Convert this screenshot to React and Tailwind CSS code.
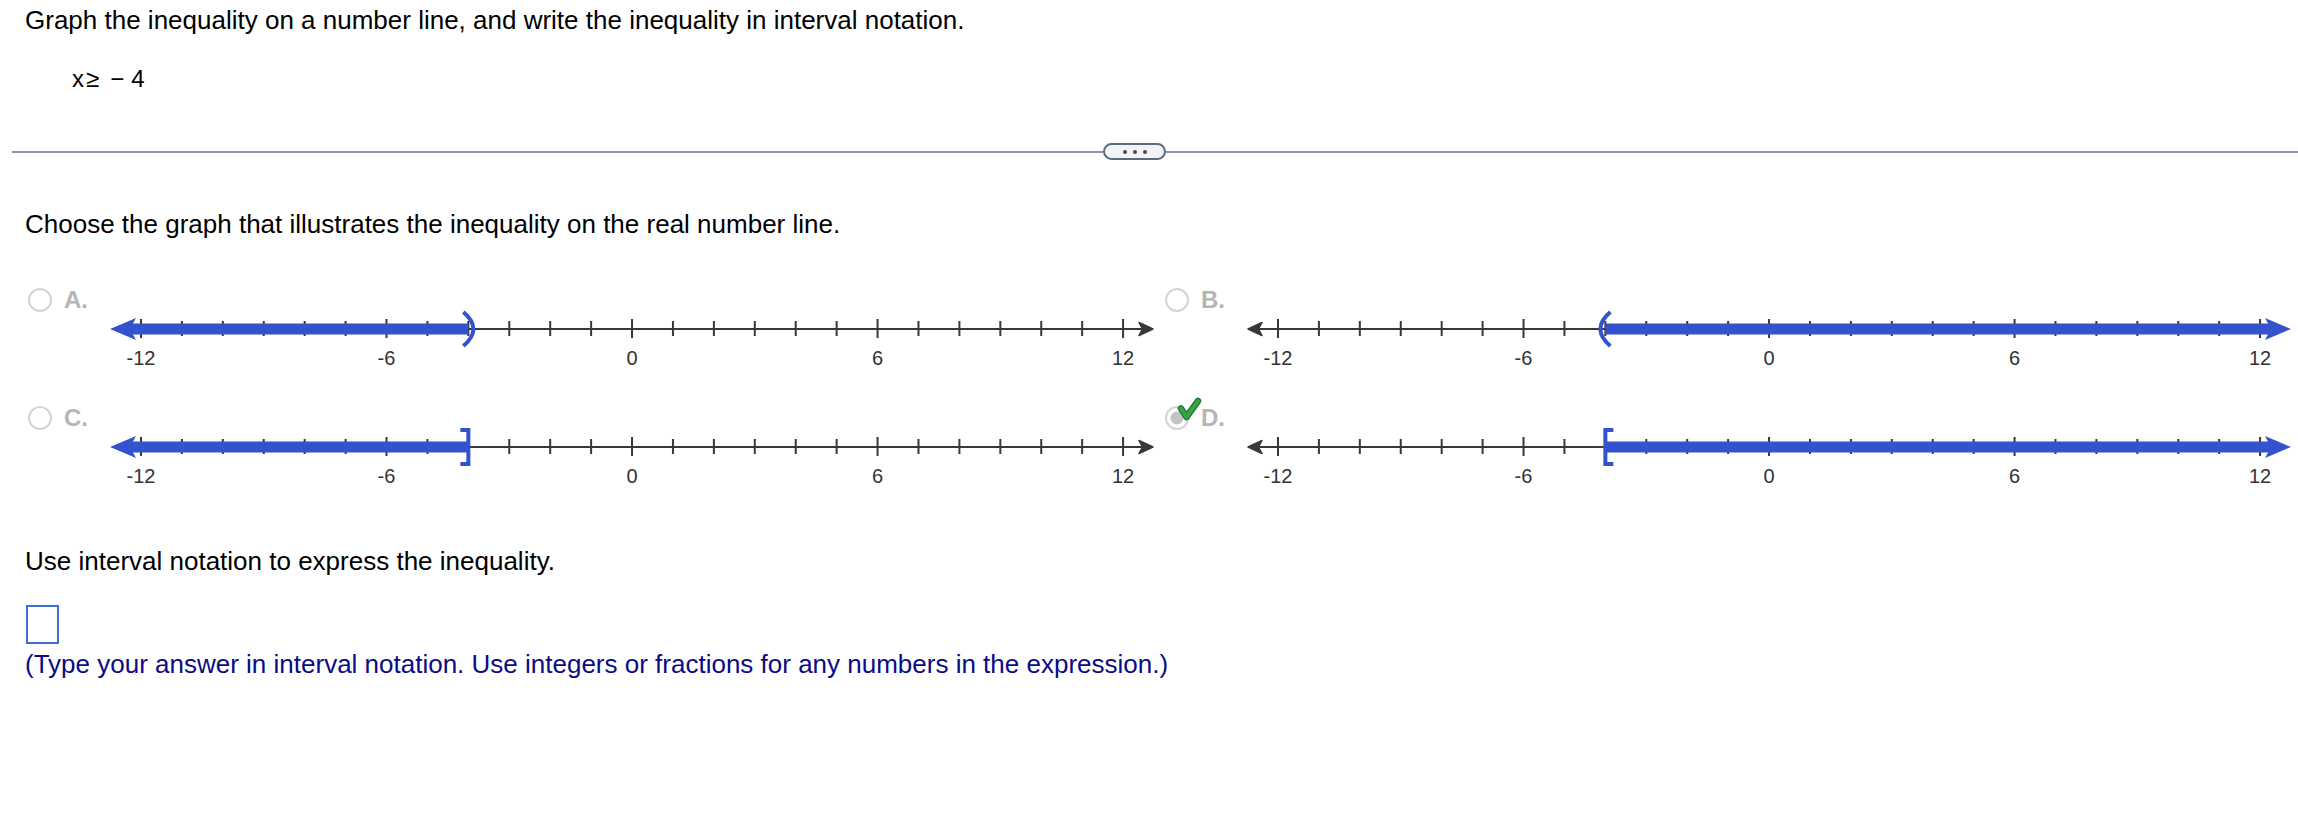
import React from 'react';

const FONT = { fontFamily: '"Liberation Sans", Arial, sans-serif' };

const X0 = 45;
const U = 40.92;
const Y = 19;
const BLUE = '#3353cc';
const INK = '#383838';

const xOf = (v) => X0 + (v + 12) * U;

function NumberLine({ kind }) {
  const xm4 = xOf(-4);
  const ticks = [];
  for (let v = -12; v <= 12; v++) ticks.push(v);
  const leftRay = kind === 'A' || kind === 'C';

  return (
    <svg width="1070" height="62" className="block overflow-visible">
      {/* axis */}
      <line x1="20" y1={Y} x2="1050" y2={Y} stroke={INK} strokeWidth="2" />
      {ticks.map((v) => {
        const major = v % 6 === 0;
        const x = xOf(v);
        return (
          <line
            key={v}
            x1={x}
            x2={x}
            y1={major ? Y - 10 : Y - 8}
            y2={major ? Y + 9 : Y + 7}
            stroke={INK}
            strokeWidth="2"
          />
        );
      })}
      {[-12, -6, 0, 6, 12].map((v) => (
        <text key={v} x={xOf(v)} y="55" textAnchor="middle" fontSize="20" fill="#333" style={FONT}>
          {v}
        </text>
      ))}

      {/* shaded ray */}
      {leftRay ? (
        <>
          <line x1="30" y1={Y} x2={xm4} y2={Y} stroke={BLUE} strokeWidth="11" />
          <path d="M14,19 L40,8 L34,19 L40,30 Z" fill={BLUE} />
          <path d="M1057,19 L1043,12.5 L1046.5,19 L1043,25.5 Z" fill={INK} stroke={INK} strokeWidth="1.5" strokeLinejoin="round" />
        </>
      ) : (
        <>
          <line x1={xm4} y1={Y} x2="1042" y2={Y} stroke={BLUE} strokeWidth="11" />
          <path d="M1058,19 L1032,8 L1038,19 L1032,30 Z" fill={BLUE} />
          <path d="M15,19 L29,12.5 L25.5,19 L29,25.5 Z" fill={INK} stroke={INK} strokeWidth="1.5" strokeLinejoin="round" />
        </>
      )}

      {/* endpoint */}
      {kind === 'A' && (
        <path d={`M${xm4 - 5},2 Q${xm4 + 15},19 ${xm4 - 5},36`} fill="none" stroke={BLUE} strokeWidth="4" />
      )}
      {kind === 'B' && (
        <path d={`M${xm4 + 5},2 Q${xm4 - 15},19 ${xm4 + 5},36`} fill="none" stroke={BLUE} strokeWidth="4" />
      )}
      {kind === 'C' && (
        <path d={`M${xm4 - 8},2 H${xm4} V36 H${xm4 - 8}`} fill="none" stroke={BLUE} strokeWidth="4" />
      )}
      {kind === 'D' && (
        <path d={`M${xm4 + 8},2 H${xm4} V36 H${xm4 + 8}`} fill="none" stroke={BLUE} strokeWidth="4" />
      )}
    </svg>
  );
}

function Radio({ checked }) {
  return (
    <svg width="26" height="26" className="block overflow-visible shrink-0">
      <circle cx="13" cy="13" r="11" fill="#fff" stroke="#d4d4d4" strokeWidth="2" />
      {checked && (
        <>
          <circle cx="13" cy="13" r="6.5" fill="#c4c4c4" />
          <path d="M17,3.5 L22.5,12 L34,-4" fill="none" stroke="#1f7a2d" strokeWidth="6.5" strokeLinecap="round" strokeLinejoin="round" />
          <path d="M17,3.5 L22.5,12 L34,-4" fill="none" stroke="#34a847" strokeWidth="3.8" strokeLinecap="round" strokeLinejoin="round" />
        </>
      )}
    </svg>
  );
}

function Option({ letter, kind, checked }) {
  return (
    <div className="w-[1137px] flex flex-col">
      <div className="flex items-center h-[26px]">
        <Radio checked={checked} />
        <span className="ml-[11px] text-[24px] leading-[26px] font-bold text-[#b5b5b5]">{letter}.</span>
      </div>
      <div className="ml-[69px] -mt-[3px]">
        <NumberLine kind={kind} />
      </div>
    </div>
  );
}

export default function App() {
  return (
    <div className="w-[2298px] h-[816px] bg-white overflow-hidden text-black" style={FONT}>
      {/* Question */}
      <div className="pl-[25px] pt-[5px]">
        <p className="text-[26px] leading-[30px]">
          Graph the inequality on a number line, and write the inequality in interval notation.
        </p>
        <p className="mt-[30px] ml-[47px] text-[24px] leading-[27px] flex">
          <span>x</span>
          <span className="ml-[2px]">≥</span>
          <span className="ml-[11px]">−</span>
          <span className="ml-[7px]">4</span>
        </p>
      </div>

      {/* Divider */}
      <div className="mt-[51px] flex items-center h-[17px]">
        <div className="ml-[12px] w-[1091px] h-[2px] bg-[#8795a6]" />
        <div className="w-[63px] h-[17px] rounded-full border-2 border-[#5b6b7c] bg-[#f1f3f5] flex items-center justify-center gap-[6px]">
          <span className="w-[4px] h-[4px] rounded-full bg-[#4a4a4a]" />
          <span className="w-[4px] h-[4px] rounded-full bg-[#4a4a4a]" />
          <span className="w-[4px] h-[4px] rounded-full bg-[#4a4a4a]" />
        </div>
        <div className="flex-1 h-[2px] bg-[#8795a6]" />
      </div>

      {/* Graph choice */}
      <p className="mt-[49px] pl-[25px] text-[26px] leading-[30px]">
        Choose the graph that illustrates the inequality on the real number line.
      </p>

      <div className="mt-[48px] pl-[27px] flex flex-col gap-[33px]">
        <div className="flex">
          <Option letter="A" kind="A" />
          <Option letter="B" kind="B" />
        </div>
        <div className="flex">
          <Option letter="C" kind="C" />
          <Option letter="D" kind="D" checked />
        </div>
      </div>

      {/* Interval notation */}
      <div className="pl-[25px]">
        <p className="mt-[56px] text-[26px] leading-[30px]">Use interval notation to express the inequality.</p>
        <div className="mt-[29px] ml-[1px] w-[33px] h-[39px] border-[2.5px] border-[#3b6fd1] bg-white" />
        <p className="mt-[5px] text-[26px] leading-[30px] text-[#0b0b85]">
          (Type your answer in interval notation. Use integers or fractions for any numbers in the expression.)
        </p>
      </div>
    </div>
  );
}
